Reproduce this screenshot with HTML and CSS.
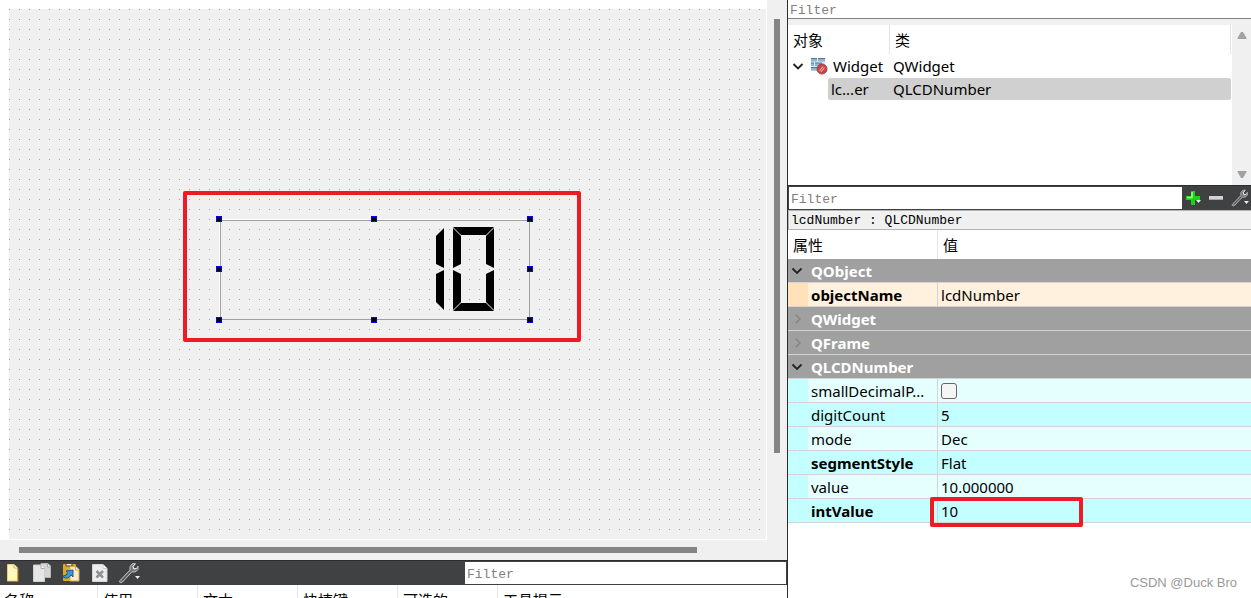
FILE: index.html
```html
<!DOCTYPE html>
<html lang="zh-CN">
<head>
  <meta charset="UTF-8">
  <title>Qt Designer - lcdNumber</title>
  <link rel="stylesheet" href="styles.css">
</head>
<body>
  <!-- wrench is used by both toolbars -->
  <svg width="0" height="0" class="defs">
    <defs>
      <symbol id="wrench" viewBox="0 0 22 22">
        <path d="M2 18.5 L12 8 Q11 4 14 2 Q16 1 17.5 1.5 L15 4.5 L16 7 L18.5 6.5 L20 4 Q21 8 18 9.5 Q16 10.5 14 9.8 L4.5 20 Q2.5 21.5 1.5 20 Q1 19 2 18.5Z" fill="#7a7a7a" stroke="#bdbdbd" stroke-width="1"/>
        <path d="M4 18.500 L12.500 9.500" stroke="#4b4b4b" stroke-width="1"/>
        <path d="M17 2 L15 4.500 L16 7 L18.500 6.500" stroke="#f4f4f4" stroke-width="1" fill="none"/>
      </symbol>
    </defs>
  </svg>

  <div class="window">
    <main class="designer">
      <div class="form-area">
        <div class="form">
          <div class="mark mark-form"></div>
          <div class="lcd" role="img" aria-label="10">
            <div class="digit one">
              <i class="seg right-top"></i><i class="seg right-bottom"></i>
            </div>
            <div class="digit zero">
              <i class="seg top"></i><i class="seg bottom"></i>
              <i class="seg left-top"></i><i class="seg left-bottom"></i>
              <i class="seg right-top"></i><i class="seg right-bottom"></i>
            </div>
            <b class="handle n w"></b><b class="handle n c"></b><b class="handle n e"></b>
            <b class="handle m w"></b><b class="handle m e"></b>
            <b class="handle s w"></b><b class="handle s c"></b><b class="handle s e"></b>
          </div>
        </div>
        <div class="vbar"><div class="thumb"></div></div>
        <div class="hbar"><div class="thumb"></div></div>
      </div>

      <section class="actions">
        <div class="toolbar">
          <div class="tools">
            <button aria-label="New">
              <svg width="22" height="22" viewBox="0 0 22 22"><path d="M5.500 2.500 H12 L15.500 6 V19 H5.500Z" fill="#fdf8c0" stroke="#e8cf7c"/><path d="M12 2.500 V6 H15.500" fill="#fff" stroke="#d9b548"/><path d="M16 6 V19.500 H5.500" stroke="#a87c22" fill="none"/></svg>
            </button>
            <button aria-label="Copy">
              <svg width="22" height="22" viewBox="0 0 22 22"><path d="M10 1.500 H17 L19.500 4 V15.500 H10Z" fill="#d5d5d5" stroke="#b5b5b5"/><path d="M2.500 3 H10 L13.500 6.500 V19.500 H2.500Z" fill="#e6e6e6" stroke="#cfcfcf"/><path d="M10 3 V6.500 H13.500 M16.500 2 V5 H19" fill="#fff" stroke="#aaa"/></svg>
            </button>
            <button aria-label="Paste">
              <svg width="22" height="22" viewBox="0 0 22 22"><rect x="3" y="2" width="13" height="17" rx="1" fill="#e0a81c"/><path d="M6 1.500 H12 V4 H6Z" fill="#eee" stroke="#4b4330"/><path d="M10 4.500 H16 L19 7.500 V19 H10Z" fill="#f9edc9" stroke="#d8aa4e"/><path d="M15.500 5 V8 H19" fill="#fff" stroke="#d8aa4e"/><path d="M3 14 Q7 14 7.500 10.500 L6 9 L13 8 V15 L11 13 Q8 18 3 15Z" fill="#3b94e4" stroke="#1c5599"/></svg>
            </button>
            <button aria-label="Delete">
              <svg width="22" height="22" viewBox="0 0 22 22"><path d="M3.500 2.500 H14 L18 6.500 V19.500 H3.500Z" fill="#ededed" stroke="#d4d4d4"/><path d="M14 2.500 V6.500 H18" fill="#fff" stroke="#ccc"/><path d="M7.500 9 L14 15.500 M14 9 L7.500 15.500" stroke="#919191" stroke-width="2.500"/></svg>
            </button>
            <button aria-label="Configure">
              <svg width="22" height="22"><use href="#wrench"/></svg>
              <svg class="drop" width="5" height="3"><path d="M0 0 H5 L2.500 3Z" fill="#eee"/></svg>
            </button>
          </div>
          <input type="text" placeholder="Filter" aria-label="Filter actions">
        </div>
        <table class="action-table">
          <thead>
            <tr><th>名称</th><th>使用</th><th>文本</th><th>快捷键</th><th>可选的</th><th>工具提示</th></tr>
          </thead>
        </table>
      </section>
    </main>

    <aside class="side">
      <input class="object-filter" type="text" placeholder="Filter" aria-label="Filter objects">
      <div class="tree">
        <table class="objects">
          <colgroup><col class="object"><col></colgroup>
          <thead>
            <tr><th>对象</th><th>类</th></tr>
          </thead>
          <tbody>
            <tr>
              <td>
                <div class="node">
                  <svg width="12" height="12" viewBox="0 0 12 12"><path d="M1.500 4 L6 8.500 L10.500 4" fill="none" stroke="#222" stroke-width="1.800"/></svg>
                  <svg width="18" height="18" viewBox="0 0 18 18"><rect x="1" y="1" width="14" height="13" fill="#dfe8ee"/><path d="M1 3 H7 M8 3 H15 M1 7.500 H4 M5 7.500 H12 M1 12 H7 M8 12 H14" stroke="#8fb4cf" stroke-width="3"/><path d="M1 1.500 H7 M8 1.500 H15 M1 6 H4 M5 6 H12 M1 10.500 H7" stroke="#4f7896"/><circle cx="12" cy="12" r="5" fill="#c64545" stroke="#a04343"/><path d="M9.500 14 L13 9.500 M11 15 L14.500 10.500" stroke="#e8a4a4" stroke-width="1.200"/></svg>
                  <span>Widget</span>
                </div>
              </td>
              <td>QWidget</td>
            </tr>
            <tr class="selected">
              <td><div class="leaf">lc...er</div></td>
              <td>QLCDNumber</td>
            </tr>
          </tbody>
        </table>
        <div class="tree-bar">
          <svg width="10" height="8" viewBox="0 0 10 8"><path d="M4 0 H6 L9.500 6 V7 H.5 V6Z" fill="#a2a2a2"/></svg>
          <svg width="10" height="8" viewBox="0 0 10 8"><path d="M.5 0 H9.500 V1 L6 7 H4 L.5 1Z" fill="#a2a2a2"/></svg>
        </div>
      </div>

      <div class="toolbar property-bar">
        <input type="text" placeholder="Filter" aria-label="Filter properties">
        <div class="tools">
          <button aria-label="Add">
            <svg width="16" height="16" viewBox="0 0 16 16"><path d="M6 1 H10 V6 H15 V10 H10 V15 H6 V10 H1 V6 H6Z" fill="#16d516"/><path d="M7 2 V7.500 H2" stroke="#a0ff91" stroke-width="1.500" fill="none"/></svg>
            <svg class="drop" width="5" height="3"><path d="M0 0 H5 L2.500 3Z" fill="#eee"/></svg>
          </button>
          <button aria-label="Remove">
            <svg width="16" height="16" viewBox="0 0 16 16"><rect x="1" y="6" width="14" height="4" fill="#d4d4d4"/><path d="M1 9.500 H15" stroke="#a8a8a8"/></svg>
          </button>
          <button aria-label="Configure properties">
            <svg width="18" height="18"><use href="#wrench"/></svg>
            <svg class="drop" width="5" height="3"><path d="M0 0 H5 L2.500 3Z" fill="#eee"/></svg>
          </button>
        </div>
      </div>
      <div class="current">lcdNumber : QLCDNumber</div>

      <table class="properties">
        <colgroup><col class="index"><col class="name"><col></colgroup>
        <thead>
          <tr><th colspan="2">属性</th><th>值</th></tr>
        </thead>
        <tbody>
          <tr class="group open"><td><svg width="12" height="12" viewBox="0 0 12 12"><path d="M1.500 3.500 L6 8 L10.500 3.500"/></svg></td><td colspan="2">QObject</td></tr>
          <tr class="orange changed"><td></td><td>objectName</td><td>lcdNumber</td></tr>
          <tr class="group"><td><svg width="12" height="12" viewBox="0 0 12 12"><path d="M4.500 1.500 L9 6 L4.500 10.500"/></svg></td><td colspan="2">QWidget</td></tr>
          <tr class="group"><td><svg width="12" height="12" viewBox="0 0 12 12"><path d="M4.500 1.500 L9 6 L4.500 10.500"/></svg></td><td colspan="2">QFrame</td></tr>
          <tr class="group open"><td><svg width="12" height="12" viewBox="0 0 12 12"><path d="M1.500 3.500 L6 8 L10.500 3.500"/></svg></td><td colspan="2">QLCDNumber</td></tr>
          <tr class="light"><td></td><td><label for="small">smallDecimalP...</label></td><td><input type="checkbox" id="small"></td></tr>
          <tr><td></td><td>digitCount</td><td>5</td></tr>
          <tr class="light"><td></td><td>mode</td><td>Dec</td></tr>
          <tr class="changed"><td></td><td>segmentStyle</td><td>Flat</td></tr>
          <tr class="light"><td></td><td>value</td><td>10.000000</td></tr>
          <tr class="changed"><td></td><td>intValue</td><td class="marked">10<div class="mark mark-value"></div></td></tr>
        </tbody>
      </table>
      <footer>CSDN @Duck Bro</footer>
    </aside>
  </div>
</body>
</html>
```
FILE: styles.css
```css
* {
  box-sizing: border-box;
}
body {
  margin: 0;
  font-family: "Noto Sans", "Noto Sans CJK SC", sans-serif;
  font-size: 15px;
  line-height: 20px;
  color: #000;
  background: #fff;
}
.defs {
  position: absolute;
}
svg {
  display: block;
}
button {
  position: relative;
  border: 0;
  padding: 0;
  background: none;
}
input {
  min-width: 0;
}
input[type="text"] {
  border: 0;
  border-radius: 0;
  padding: 2px 2px 0;
  outline: 0;
  background: #fff;
  font-family: "Liberation Mono", monospace;
  font-size: 13px;
}
input::placeholder {
  color: #808080;
}
table {
  border-spacing: 0;
  table-layout: fixed;
  width: 100%;
}
th, td {
  padding: 0;
  text-align: left;
  font-weight: normal;
  white-space: nowrap;
}
.window {
  display: flex;
  height: 100vh;
  overflow: hidden;
}

/* form editor */
.designer {
  flex: 1;
  min-width: 0;
  display: flex;
  flex-direction: column;
  border-right: 1px solid #2d2d2d;
}
.form-area {
  flex: 1;
  min-height: 0;
  display: grid;
  grid-template-columns: 1fr 20px;
  grid-template-rows: 1fr 20px;
  background: #f0f0f0;
}
.form {
  position: relative;
  border: solid #fff;
  border-width: 9px 1px 1px 9px;
  background-color: #f0f0f0;
  background-image: conic-gradient(from 0deg at 1px 1px, transparent 270deg, #a0a0a0 270deg);
  background-size: 10px 10px;
}
.vbar {
  padding: 19px 7px 0;
}
.vbar .thumb {
  width: 6px;
  height: calc(100% - 87px);
  background: #858585;
}
.hbar {
  padding: 7px 0 0 19px;
}
.hbar .thumb {
  width: calc(100% - 70px);
  height: 6px;
  background: #858585;
}
.mark {
  position: absolute;
  border: 4px solid #ed1c24;
  border-radius: 2px;
}
.mark-form {
  left: 174px;
  top: 182px;
  width: 398px;
  height: 151px;
}
.lcd {
  position: absolute;
  left: 211px;
  top: 211px;
  width: 310px;
  height: 100px;
  border: 1px solid #a0a0a0;
  box-shadow: -1px -1px #fff;
}
.digit {
  position: absolute;
  top: 6px;
  height: 84px;
}
.one {
  left: 215px;
  width: 8px;
}
.zero {
  left: 232px;
  width: 41px;
}
.seg {
  position: absolute;
  background: #000;
}
.top, .bottom {
  left: 0;
  width: 41px;
  height: 8px;
}
.top {
  top: 0;
  clip-path: polygon(0 0, 41px 0, 33px 8px, 8px 8px);
}
.bottom {
  bottom: 0;
  clip-path: polygon(8px 0, 33px 0, 41px 8px, 0 8px);
}
.left-top, .left-bottom {
  left: 0;
  width: 8px;
  height: 41px;
}
.right-top, .right-bottom {
  right: 0;
  width: 8px;
  height: 41px;
}
.left-top, .right-top {
  top: 0;
}
.left-bottom, .right-bottom {
  bottom: 0;
}
.left-top {
  clip-path: polygon(0 1px, 8px 9px, 8px 37px, 0 41px);
}
.left-bottom {
  clip-path: polygon(0 0, 8px 4px, 8px 32px, 0 40px);
}
.right-top {
  clip-path: polygon(8px 1px, 8px 41px, 0 37px, 0 9px);
}
.right-bottom {
  clip-path: polygon(8px 0, 8px 40px, 0 32px, 0 4px);
}
.handle {
  position: absolute;
  width: 6px;
  height: 6px;
  border: 1px solid #00f;
  background: #000;
}
.n { top: -5px; }
.m { top: 45px; }
.s { bottom: -4px; }
.w { left: -5px; }
.c { left: 150px; }
.e { right: -4px; }

/* action editor */
.toolbar {
  display: flex;
  justify-content: space-between;
  height: 25px;
  border: solid #2d2d2d;
  border-width: 1px 0 0;
  padding: 1px 0;
  background: #404142;
}
.tools {
  display: flex;
  align-items: center;
}
.drop {
  position: absolute;
  right: 0;
  bottom: 5px;
}
.actions {
  height: 38px;
  overflow: hidden;
}
.actions .tools {
  gap: 7px;
  padding-left: 2px;
}
.actions .toolbar {
  padding-right: 1px;
}
.actions input {
  width: 321px;
}
.action-table th {
  width: 100px;
  height: 29px;
  padding-left: 5px;
  border-right: 1px solid #e5e5e5;
}
.action-table th:first-child {
  width: 98px;
  padding-left: 4px;
}
.action-table th:last-child {
  width: auto;
  border: 0;
}

/* object inspector */
.side {
  width: 463px;
  display: flex;
  flex-direction: column;
}
.side .object-filter {
  height: 19px;
  border-bottom: 1px solid #808080;
}
.tree {
  display: flex;
  align-items: flex-start;
  height: 166px;
  border-top: 6px solid #f0f0f0;
}
.objects {
  flex: 1;
}
.objects .object {
  width: 102px;
}
.objects th {
  height: 29px;
  padding-left: 5px;
  border-right: 1px solid #e5e5e5;
}
.objects td {
  height: 24px;
  padding-left: 3px;
}
.objects td:first-child {
  padding-left: 4px;
}
.objects .selected td {
  height: 22px;
}
.objects .selected td:last-child {
  background: #d0d0d0;
  border-radius: 0 2px 2px 0;
}
.node {
  display: flex;
  align-items: center;
}
.node svg + svg {
  margin: 0 5px 0 6px;
}
.leaf {
  height: 22px;
  margin-left: 36px;
  padding-left: 3px;
  border-radius: 2px 0 0 2px;
  background: #d0d0d0;
  line-height: 22px;
}
.tree-bar {
  display: flex;
  flex-direction: column;
  justify-content: space-between;
  align-items: center;
  width: 20px;
  height: 160px;
  padding: 7px 0 6px;
  border-left: 1px solid #fff;
  background: #f0f0f0;
}

/* property editor */
.property-bar input {
  flex: 1;
  margin-left: 1px;
}
.property-bar .tools {
  gap: 7px;
  padding: 0 2px 0 3px;
}
.property-bar .drop {
  bottom: 3px;
}
.current {
  height: 20px;
  padding-left: 2px;
  border: 1px solid #b4b4b4;
  border-right: 0;
  background: #f0f0f0;
  font-family: "Liberation Mono", monospace;
  font-size: 13px;
  line-height: 20px;
}
.properties .index {
  width: 20px;
}
.properties .name {
  width: 130px;
}
.properties th {
  height: 29px;
  padding-left: 5px;
}
.properties th:first-child {
  border-right: 1px solid #e5e5e5;
}
.properties td {
  height: 24px;
  padding-left: 3px;
  border-bottom: 1px solid #d4d4d4;
  background: #c4ffff;
}
.properties td:nth-child(2) {
  border-right: 1px solid #d4d4d4;
}
.properties .light td + td {
  background: #e5ffff;
}
.properties .orange td {
  background: #ffe2ba;
}
.properties .orange td + td {
  background: #fff1de;
}
.properties .group td {
  border-right: 0;
  background: #a0a0a0;
  color: #fff;
  font-weight: bold;
}
.changed td:nth-child(2) {
  font-weight: bold;
}
.group path {
  fill: none;
  stroke: #858585;
  stroke-width: 1.5;
}
.open path {
  stroke: #222;
  stroke-width: 1.8;
}
.properties input {
  appearance: none;
  display: block;
  width: 16px;
  height: 16px;
  margin: 0;
  border: 1px solid #666;
  border-radius: 3px;
  background: #f5f5f5;
}
.marked {
  position: relative;
}
.mark-value {
  left: -8px;
  top: -2px;
  width: 153px;
  height: 30px;
}
footer {
  margin-top: auto;
  padding: 0 14px 5px 0;
  text-align: right;
  font-family: "Liberation Sans", sans-serif;
  font-size: 13px;
  color: #999;
}
```
